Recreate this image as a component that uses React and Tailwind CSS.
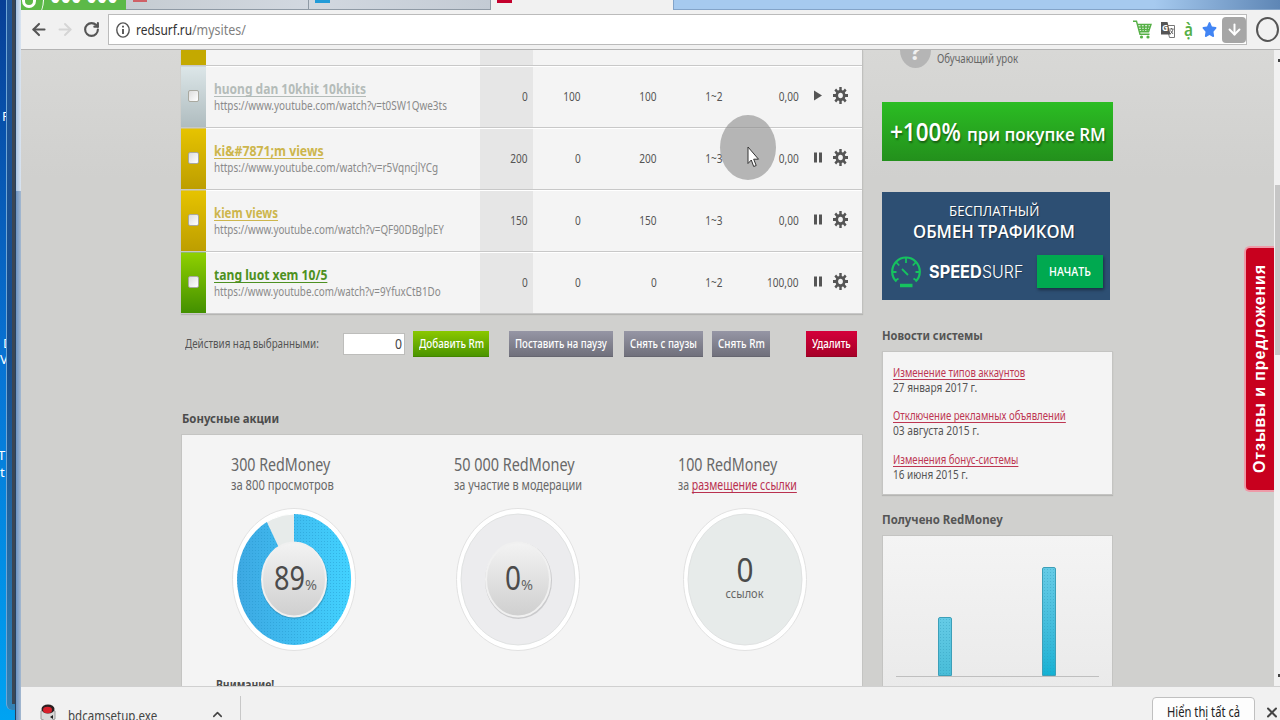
import { useLayoutEffect, useRef, useState } from 'react';
import { ArrowDown, ArrowLeft, ArrowRight, ChevronUp, RotateCw, X } from 'lucide-react';
import { FaStar } from 'react-icons/fa';

/* One line of condensed text, squeezed horizontally to the given width. */
function Fit({ w, className = '', children }) {
    const ref = useRef(null);
    const [scale, setScale] = useState(1);

    useLayoutEffect(() => {
        setScale(w / ref.current.offsetWidth);
    }, [w, children]);

    return (
        <span className="block shrink-0 whitespace-nowrap" style={{ width: w }}>
            <span ref={ref} className={`block w-max origin-left ${className}`} style={{ transform: `scaleX(${scale})` }}>
                {children}
            </span>
        </span>
    );
}

const LINK = 'underline underline-offset-2 [text-decoration-skip-ink:none]';

const SITES = [
    {
        title: 'huong dan 10khit 10khits',
        titleWidth: 152,
        url: 'https://www.youtube.com/watch?v=t0SW1Qwe3ts',
        urlWidth: 233,
        values: ['0', '100', '100', '1~2', '0,00'],
        paused: true,
        strip: 'from-[#dce6e8] to-[#afbcbf]',
        color: 'text-[#b4bcb9]',
    },
    {
        title: 'ki&#7871;m views',
        titleWidth: 110,
        url: 'https://www.youtube.com/watch?v=r5VqncjlYCg',
        urlWidth: 224,
        values: ['200', '0', '200', '1~3', '0,00'],
        strip: 'from-[#e6c300] to-[#bd9e00]',
        color: 'text-[#cdb64c]',
    },
    {
        title: 'kiem views',
        titleWidth: 64,
        url: 'https://www.youtube.com/watch?v=QF90DBglpEY',
        urlWidth: 230,
        values: ['150', '0', '150', '1~3', '0,00'],
        strip: 'from-[#e6c300] to-[#bd9e00]',
        color: 'text-[#cdb64c]',
    },
    {
        title: 'tang luot xem 10/5',
        titleWidth: 113,
        url: 'https://www.youtube.com/watch?v=9YfuxCtB1Do',
        urlWidth: 227,
        values: ['0', '0', '0', '1~2', '100,00'],
        strip: 'from-[#8fd000] to-[#429000]',
        color: 'text-[#4d9021]',
    },
];

const ROW = 'grid grid-cols-[25px_274px_53px_53px_76px_66px_76px_1fr]';

const ACTIONS = [
    { label: 'Добавить Rm', width: 65, box: 'ml-2 w-[76px] from-[#8ac800] to-[#4b9500] border-[#438400]' },
    { label: 'Поставить на паузу', width: 92, box: 'ml-5 w-[104px] from-[#9696a5] to-[#70707c] border-[#666670]' },
    { label: 'Снять с паузы', width: 67, box: 'ml-[11px] w-[79px] from-[#9696a5] to-[#70707c] border-[#666670]' },
    { label: 'Снять Rm', width: 47, box: 'ml-[9px] w-[58px] from-[#9696a5] to-[#70707c] border-[#666670]' },
    { label: 'Удалить', width: 39, box: 'ml-9 w-[51px] from-[#d4003a] to-[#a70028] border-[#950022]' },
];

const NEWS = [
    { title: 'Изменение типов аккаунтов', width: 132, date: '27 января 2017 г.', dateWidth: 84 },
    { title: 'Отключение рекламных объявлений', width: 173, date: '03 августа 2015 г.', dateWidth: 86 },
    { title: 'Изменения бонус-системы', width: 125, date: '16 июня 2015 г.', dateWidth: 75 },
];

function Desktop() {
    return (
        <div className="relative w-[21px] shrink-0 overflow-hidden bg-gradient-to-b from-[#073f96] via-[#0873d4] to-[#00a3f2] text-[13px] leading-4 text-white">
            <div className="absolute left-[2px] top-[108px]">P</div>
            <div className="absolute left-[3px] top-[335px]">D</div>
            <div className="absolute left-0 top-[351px]">V</div>
            <div className="absolute -left-[2px] top-[447px]">T</div>
            <div className="absolute left-0 top-[464px]">t</div>
            <div className="absolute -top-1 left-[6px] h-[714px] w-[10px] rounded-bl-md border-l border-[#6fa6d6] bg-gradient-to-b from-[#205699] via-[#164b8a] to-[#3482b5]" />
            <div className="absolute left-3 top-0 h-[704px] w-[3px] bg-[#3b4654]" />
            <div className="absolute left-[15px] top-0 flex h-full w-[6px] flex-col border-l border-[#26415f]">
                <div className="h-[191px] bg-gradient-to-r from-[#a9c4e3] to-[#dbe5f1]" />
                <div className="flex-1 bg-gradient-to-r from-[#6b92c2] to-[#a5b9d0]" />
            </div>
        </div>
    );
}

function TabStrip() {
    return (
        <div className="flex h-[10px] overflow-hidden bg-gradient-to-r from-[#a6caef] via-[#a6caef] via-90% to-[#5e86b5] text-xs">
            <div className="relative w-[105px] overflow-hidden bg-[#5cb948]">
                <div className="absolute -top-[14px] left-[1px] h-[22px] w-[14px] rounded-full border-[3px] border-white" />
                <div className="absolute -top-[18px] left-[7px] h-[34px] w-[16px] rounded-[50%] border-r border-white" />
                <div className="absolute -top-[18px] left-[29px]">
                    <Fit w={68} className="font-['Open_Sans',sans-serif] text-[24px] font-extrabold leading-6 text-white">
                        000 000
                    </Fit>
                </div>
            </div>
            <div className="w-[183px] border-b border-r border-[#8f9aa5] bg-gradient-to-r from-[#c5ccd2] to-[#d2d8e0] pl-[7px]">
                <div className="h-[2px] w-[14px] bg-[#cf6067]" />
            </div>
            <div className="w-[182px] border-b border-r border-[#8f9aa5] bg-gradient-to-r from-[#d2d8e0] to-[#c3cbd4] pl-[6px]">
                <div className="h-[3px] w-[15px] bg-[#229bd8]" />
            </div>
            <div className="w-[182px] bg-[#f1f1f1] pl-[6px]">
                <div className="h-[3px] w-[15px] bg-[#c4002d]" />
            </div>
            <div className="flex-1 border-b border-l border-[#83a4c9]" />
        </div>
    );
}

function CartIcon() {
    return (
        <svg className="h-[20px] w-[19px]" viewBox="0 0 19 20" fill="none" stroke="#56b046" strokeWidth="1.4">
            <path d="M0 1.2h3.5L7 14.2h9.5M4 4.5h14l-2.4 7.2H6.2M5 7h12.4M5.7 9.5h11M8 4.5l1 7.2M11.4 4.5v7.2M15 4.5l-1 7.2" />
            <circle cx="8.5" cy="17" r="1.6" fill="#56b046" stroke="none" />
            <circle cx="15" cy="17" r="1.6" fill="#56b046" stroke="none" />
        </svg>
    );
}

function TranslateIcon() {
    return (
        <svg className="h-4 w-[14px]" viewBox="0 0 14 16">
            <path d="M5.5 3.5h8v12h-5z" fill="#fff" stroke="#777" />
            <path d="M0 0h6.5l3 12.5H0z" fill="#555" />
            <text x="1" y="9" fontSize="8.5" fontWeight="700" fill="#fff">G</text>
            <path d="M8.5 7h4M10.5 6v1M12 7c-.5 2.5-1.5 4-3 5M9.5 8.5l2.5 3.5" stroke="#666" fill="none" />
        </svg>
    );
}

function Toolbar() {
    return (
        <div className="flex h-10 items-center border-b border-[#b3b3b3] bg-[#f1f1f1] pl-2 text-[#555]">
            <ArrowLeft className="h-[19px] w-5" strokeWidth={2.6} />
            <ArrowRight className="ml-[6px] h-[19px] w-5 text-[#d5d5d5]" strokeWidth={2.4} />
            <RotateCw className="ml-[8px] h-[17px] w-[17px]" strokeWidth={3} />
            <div className="ml-[8px] flex h-[31px] w-[1139px] shrink-0 items-center border border-[#bbb] bg-white pl-[7px]">
                <svg className="h-4 w-[14px]" viewBox="0 0 14 16" fill="none" stroke="#555" preserveAspectRatio="none">
                    <ellipse cx="7" cy="8" rx="6.2" ry="7.1" strokeWidth="1.4" />
                    <path d="M7 7v5M7 3.8v1.8" strokeWidth="1.9" />
                </svg>
                <div className="-mt-px ml-[6px] flex flex-1 text-[14.5px] leading-5">
                    <Fit w={56} className="text-[#333]">redsurf.ru</Fit>
                    <Fit w={54} className="text-[#808080]">/mysites/</Fit>
                </div>
                <CartIcon />
                <span className="ml-[9px]"><TranslateIcon /></span>
                <span className="ml-[9px] text-[17px] font-semibold leading-5 text-[#56b046]">
                    <Fit w={9}>ạ̀</Fit>
                </span>
                <FaStar className="ml-[9px] h-[15px] w-[15px] text-[#4285f4]" preserveAspectRatio="none" />
                <span className="ml-[5px] flex h-[26px] w-[24px] items-center justify-center rounded-sm bg-[#a6a6a6] text-white">
                    <ArrowDown className="h-[19px] w-[17px]" strokeWidth={2.8} />
                </span>
            </div>
            <div className="ml-[9px] h-[25px] w-[23px] shrink-0 rounded-[50%] border-2 border-[#555]" />
        </div>
    );
}

function SiteRow({ site }) {
    return (
        <div className={`${ROW} h-[62px] border-b border-[#c8c8c8] bg-[#f4f4f4]`}>
            <div className={`flex items-center justify-center border-t border-white/40 bg-gradient-to-b pb-[3px] ${site.strip}`}>
                <span className="h-[12px] w-[11px] rounded-[2px] border border-[#a9a9a0] bg-gradient-to-br from-[#ddd] to-white" />
            </div>
            <div className="border-t border-white pl-2 pt-[13px]">
                <Fit w={site.titleWidth} className={`text-[13.5px] font-bold leading-[18px] ${LINK} ${site.color}`}>
                    {site.title}
                </Fit>
                <Fit w={site.urlWidth} className="text-[12.5px] leading-4 text-[#8a8a8a]">{site.url}</Fit>
            </div>
            {site.values.map((value, i) => (
                <div
                    key={i}
                    className={`flex items-center justify-end border-t border-white pr-[5px] text-xs text-[#555] ${i === 0 ? 'bg-[#e6e6e6]' : ''}`}
                >
                    <span className="origin-right scale-x-[0.84]">{value}</span>
                </div>
            ))}
            <div className="flex items-center border-t border-white pb-[3px] pl-[9px] text-[#555]">
                <svg className="h-[11px] w-[10px]" viewBox="0 0 10 11" fill="currentColor">
                    {site.paused ? <path d="M1 .5v10l8-5z" /> : <path d="M1 .5h3v10H1zM6 .5h3v10H6z" />}
                </svg>
                <Gear />
            </div>
        </div>
    );
}

function Gear() {
    return (
        <svg className="ml-[10px] h-[17px] w-[15px]" viewBox="-8 -8 16 16" preserveAspectRatio="none">
            <g stroke="currentColor" strokeWidth="2.6">
                <path d="M0-8V8M-8 0H8M-5.6-5.6L5.6 5.6M-5.6 5.6L5.6-5.6" />
            </g>
            <circle r="5.3" fill="currentColor" />
            <circle r="2.5" fill="#f4f4f4" />
        </svg>
    );
}

function SitesTable() {
    return (
        <div className="border-r border-[#c0c0be] shadow-[0_1px_1px_#b5b5b3]">
            <div className={`${ROW} h-4 border-b border-[#c8c8c8] bg-[#f4f4f4]`}>
                <div className="bg-[#c4a900]" />
                <div />
                <div className="bg-[#e6e6e6]" />
            </div>
            {SITES.map((site) => (
                <SiteRow key={site.title} site={site} />
            ))}
        </div>
    );
}

function Actions() {
    return (
        <div className="mt-[17px] flex h-[26px] items-center pl-1 text-xs text-[#555]">
            <Fit w={134}>Действия над выбранными:</Fit>
            <div className="ml-6 flex h-[22px] w-[62px] items-center justify-end border border-[#bdbdbb] bg-white pr-[2px] text-[14px] text-[#444]">
                <Fit w={7}>0</Fit>
            </div>
            {ACTIONS.map((a) => (
                <button key={a.label} className={`flex h-[26px] shrink-0 items-center justify-center border-b bg-gradient-to-b text-white ${a.box}`}>
                    <Fit w={a.width} className="font-medium">{a.label}</Fit>
                </button>
            ))}
        </div>
    );
}

/* Round gauge, slightly taller than wide. The sector leaves a gap left of twelve o'clock. */
function Gauge({ filled, knob = true, value, unit, digitsWidth }) {
    return (
        <svg className="h-[144px] w-[126px]" viewBox="0 0 126 144">
            <defs>
                <linearGradient id="gaugeBlue" x1="0" x2="1">
                    <stop offset="0" stopColor="#3da8e2" />
                    <stop offset="1" stopColor="#42d2ff" />
                </linearGradient>
                <linearGradient id="gaugeKnob" x1="0" x2="0" y1="0" y2="1">
                    <stop offset="0" stopColor="#f3f3f3" />
                    <stop offset="1" stopColor="#cfcfcf" />
                </linearGradient>
                <pattern id="gaugeDots" width="3" height="3" patternUnits="userSpaceOnUse">
                    <rect width="1" height="1" fill="#1e8fc4" opacity=".4" />
                </pattern>
            </defs>
            <ellipse cx="63" cy="71.5" rx="61.5" ry="71" fill="#fff" stroke="#e2e2e2" />
            <ellipse cx="63" cy="71.5" rx="57" ry="65.5" fill={knob && !filled ? '#ececee' : '#e7ebea'} stroke={filled ? '#fff' : '#e0e2e2'} />
            {filled && (
                <>
                    <path d="M63 71.5V6A57 65.5 0 1 1 35.8 14z" fill="url(#gaugeBlue)" />
                    <path d="M63 71.5V6A57 65.5 0 1 1 35.8 14z" fill="url(#gaugeDots)" />
                </>
            )}
            {knob && (
                <>
                    <ellipse cx="63.5" cy="72.5" rx="33.5" ry="38.5" fill="#000" opacity=".14" />
                    <ellipse cx="63" cy="71.5" rx="32" ry="37" fill="url(#gaugeKnob)" stroke="#f0f0f0" strokeWidth="2" />
                </>
            )}
            {knob ? (
                <>
                    <text x={filled ? 43 : 50} y="82" fontSize="32" fill="#4b4b4b" textLength={digitsWidth} lengthAdjust="spacingAndGlyphs">
                        {value}
                    </text>
                    <text x={filled ? 74 : 66} y="82" fontSize="14" fill="#666" textLength="12" lengthAdjust="spacingAndGlyphs">
                        {unit}
                    </text>
                </>
            ) : (
                <>
                    <text x="54.5" y="74" fontSize="32" fill="#4b4b4b" textLength={digitsWidth} lengthAdjust="spacingAndGlyphs">
                        {value}
                    </text>
                    <text x="43.5" y="90" fontSize="13" fill="#666" textLength="38" lengthAdjust="spacingAndGlyphs">
                        {unit}
                    </text>
                </>
            )}
        </svg>
    );
}

function Bonuses() {
    return (
        <>
            <h2 className="mt-[52px] pl-px text-[13px] font-bold leading-[18px] text-[#4c4c4c]">
                <Fit w={97}>Бонусные акции</Fit>
            </h2>
            <div className="mt-[7px] h-[300px] border border-[#c4c4c2] bg-[#f4f4f4] pl-[49px] pt-[17px] text-[13.5px] text-[#686868]">
                <div className="grid grid-cols-[223px_224px_1fr]">
                    <div>
                        <Fit w={99} className="text-[18px] leading-6">300 RedMoney</Fit>
                        <Fit w={103} className="leading-[18px]">за 800 просмотров</Fit>
                        <div className="mt-[14px]"><Gauge filled value="89" unit="%" digitsWidth={31} /></div>
                    </div>
                    <div>
                        <Fit w={121} className="text-[18px] leading-6">50 000 RedMoney</Fit>
                        <Fit w={128} className="leading-[18px]">за участие в модерации</Fit>
                        <div className="ml-px mt-[14px]"><Gauge value="0" unit="%" digitsWidth={16} /></div>
                    </div>
                    <div>
                        <Fit w={99} className="text-[18px] leading-6">100 RedMoney</Fit>
                        <Fit w={119} className="leading-[18px]">
                            за <a className={`text-[#b9304f] ${LINK}`}>размещение ссылки</a>
                        </Fit>
                        <div className="ml-1 mt-[14px]"><Gauge knob={false} value="0" unit="ссылок" digitsWidth={17} /></div>
                    </div>
                </div>
                <div className="-ml-[15px] mt-[24px] text-[12.5px] font-bold leading-[18px] text-[#4c4c4c]">
                    <Fit w={58}>Внимание!</Fit>
                </div>
            </div>
        </>
    );
}

function SpeedBanner() {
    return (
        <div className="mt-[31px] flex h-[108px] w-[228px] flex-col bg-[#2d4f73] pt-[8px] font-['Open_Sans',sans-serif] text-white">
            <div className="pl-[67px]">
                <Fit w={90} className="text-[15px] leading-5 [text-shadow:1px_1px_1px_#0006]">БЕСПЛАТНЫЙ</Fit>
            </div>
            <div className="pl-[31px]">
                <Fit w={162} className="text-[17.5px] font-semibold leading-[22px] [text-shadow:1px_1px_1px_#0006]">ОБМЕН ТРАФИКОМ</Fit>
            </div>
            <div className="mt-[13px] flex items-center pl-[9px]">
                <svg className="h-8 w-[30px]" viewBox="0 0 30 32" fill="none" stroke="#16c25f" strokeWidth="2.2">
                    <path d="M5.5 25.5C2.7 23 1.2 19.6 1.2 15.8 1.2 7.8 7.2 1.5 15 1.5s13.8 6.3 13.8 14.3c0 3.8-1.5 7.2-4.3 9.7" />
                    <path d="M15 2v5M5 6l3.2 3.5M25 6l-3.2 3.5M1.5 16h4M28.5 16h-4M4.5 24.5l3-2M25.5 24.5l-3-2M11 13l6 6" strokeWidth="1.8" />
                    <path d="M9 29.5h12.5" strokeWidth="3.5" />
                </svg>
                <div className="ml-2 flex font-['Inter',sans-serif] text-[17.5px] leading-6 [text-shadow:1px_1px_1px_#0004]">
                    <Fit w={53} className="font-bold">SPEED</Fit>
                    <Fit w={41} className="font-light">SURF</Fit>
                </div>
                <button className="ml-[14px] flex h-[33px] w-[66px] items-center justify-center bg-[#00a950] text-xs shadow-[1px_2px_3px_#0006]">
                    <Fit w={42} className="font-semibold">НАЧАТЬ</Fit>
                </button>
            </div>
        </div>
    );
}

function Sidebar() {
    return (
        <aside className="ml-[19px] w-[231px] shrink-0">
            <div className="flex h-[52px] pl-[18px]">
                <div className="-mt-[18px] flex h-[36px] w-[31px] items-end justify-center rounded-[50%] bg-[#b5b5b5]">
                    <span className="text-[24px] font-bold leading-[34px] text-[#f0f0f0]">?</span>
                </div>
                <div className="ml-[6px] text-xs leading-[18px] text-[#666]"><Fit w={81}>Обучающий урок</Fit></div>
            </div>
            <div className="flex h-[59px] items-baseline bg-gradient-to-b from-[#2bbd23] to-[#23901c] pl-[8px] pt-[11px] font-['Open_Sans',sans-serif] font-semibold text-white [text-shadow:1px_2px_2px_#0006]">
                <Fit w={71} className="text-[25px] leading-9">+100%</Fit>
                <span className="w-[6px]" />
                <Fit w={139} className="text-[18.5px] leading-9">при покупке RM</Fit>
            </div>
            <SpeedBanner />
            <h2 className="mt-[26px] text-[13px] font-bold leading-[18px] text-[#555]"><Fit w={101}>Новости системы</Fit></h2>
            <div className="mt-[7px] flex h-[144px] flex-col gap-[13.5px] border border-[#c4c4c2] bg-[#f4f4f4] pl-[10px] pt-[12.5px] text-xs leading-[15px] shadow-[0_1px_1px_#b5b5b3]">
                {NEWS.map((n) => (
                    <div key={n.title}>
                        <Fit w={n.width} className={`text-[#bd3652] ${LINK}`}>{n.title}</Fit>
                        <Fit w={n.dateWidth} className="text-[#555]">{n.date}</Fit>
                    </div>
                ))}
            </div>
            <h2 className="mt-[15px] text-[13px] font-bold leading-[18px] text-[#555]"><Fit w={121}>Получено RedMoney</Fit></h2>
            <div className="mt-[7px] h-[170px] border border-[#c4c4c2] bg-gradient-to-b from-[#f4f4f4] to-[#e9e9e9] px-[13px]">
                <div className="flex h-[141px] items-end gap-[90px] border-b border-[#bfbfbf] pl-[42px]">
                    <Bar className="h-[59px] to-[#48bdd8]" />
                    <Bar className="h-[109px] to-[#12b2d4]" />
                </div>
            </div>
        </aside>
    );
}

function Bar({ className }) {
    return (
        <div className={`w-[14px] rounded-t-[2px] border border-[#3c9fb8] bg-gradient-to-b from-[#65cbe6] ${className}`}>
            <div className="h-full bg-[radial-gradient(#2e98b8_0.6px,transparent_0.7px)] bg-[length:3px_3px] opacity-40" />
        </div>
    );
}

function Downloads() {
    return (
        <div className="flex h-[34px] items-start border-t border-[#d0d0d0] bg-[#f1f1f1] text-[14px] text-[#444]">
            <svg className="ml-[19px] mt-[17px] h-[18px] w-4" viewBox="0 0 16 18">
                <path d="M1 7l7-3 7 3v8l-7 3-7-3z" fill="#d9d9d9" stroke="#999" />
                <ellipse cx="8" cy="5" rx="6.5" ry="4.5" fill="#2a2022" />
                <ellipse cx="7.5" cy="6" rx="4.5" ry="3.3" fill="#d8202c" />
                <path d="M10 13l3-2v4z" fill="#222" />
            </svg>
            <div className="ml-3 mt-[19px] leading-5"><Fit w={89}>bdcamsetup.exe</Fit></div>
            <ChevronUp className="ml-[53px] mt-[19px] h-[17px] w-[15px]" strokeWidth={2.5} />
            <div className="ml-[15px] mt-[9px] h-6 w-px bg-[#c8c8c8]" />
            <button className="ml-auto mt-[10px] flex h-[31px] w-[103px] justify-center rounded-sm border border-[#c0c0c0] bg-[#fdfdfd] pt-1 text-[13.5px] leading-5 text-[#222]">
                <Fit w={73}>Hiển thị tất cả</Fit>
            </button>
            <X className="ml-[9px] mt-[17px] h-[17px] w-4" strokeWidth={3} />
        </div>
    );
}

/* Recorder highlight with the mouse pointer on it. */
function Pointer() {
    return (
        <>
            <div className="absolute left-[720px] top-[115px] h-[65px] w-[56px] rounded-[50%] bg-[#8a8a8a]/60" />
            <svg className="absolute left-[747px] top-[146px] h-[22px] w-[13px]" viewBox="0 0 13 22" fill="#fff" stroke="#333">
                <path d="M1 1v16.5l3.3-3.5 2.4 6.5 2.5-1-2.5-6.3H11.5z" />
            </svg>
        </>
    );
}

export default function App() {
    return (
        <div className="relative flex h-[720px] w-[1280px] overflow-hidden font-['Noto_Sans',sans-serif]">
            <Desktop />
            <div className="flex w-[1259px] flex-col">
                <TabStrip />
                <Toolbar />
                <div className="relative flex h-[636px] overflow-hidden bg-gradient-to-b from-[#d8d8d6] via-[#d0d0ce] via-20% to-[#d0d0ce] pl-[160px]">
                    <main className="w-[682px] shrink-0">
                        <SitesTable />
                        <Actions />
                        <Bonuses />
                    </main>
                    <Sidebar />
                    <div className="absolute right-[6px] top-[196px] flex h-[246px] w-[30px] rotate-180 items-center justify-center rounded-r-md border-2 border-l-0 border-[#ee9aa8] bg-[#c8001e] font-['Liberation_Sans',sans-serif] text-[16px] font-bold tracking-[0.9px] text-white [writing-mode:vertical-rl]">
                        Отзывы и предложения
                    </div>
                    <div className="absolute right-0 top-0 h-full w-[6px] bg-[#f1f1f1]">
                        <div className="absolute right-0 top-[9px] h-[3px] w-[2px] bg-[#444]" />
                        <div className="mt-[135px] ml-px h-[170px] bg-[#c6c6c6]" />
                        <div className="absolute bottom-[9px] right-0 h-[3px] w-[2px] bg-[#444]" />
                    </div>
                </div>
                <Downloads />
            </div>
            <Pointer />
        </div>
    );
}
